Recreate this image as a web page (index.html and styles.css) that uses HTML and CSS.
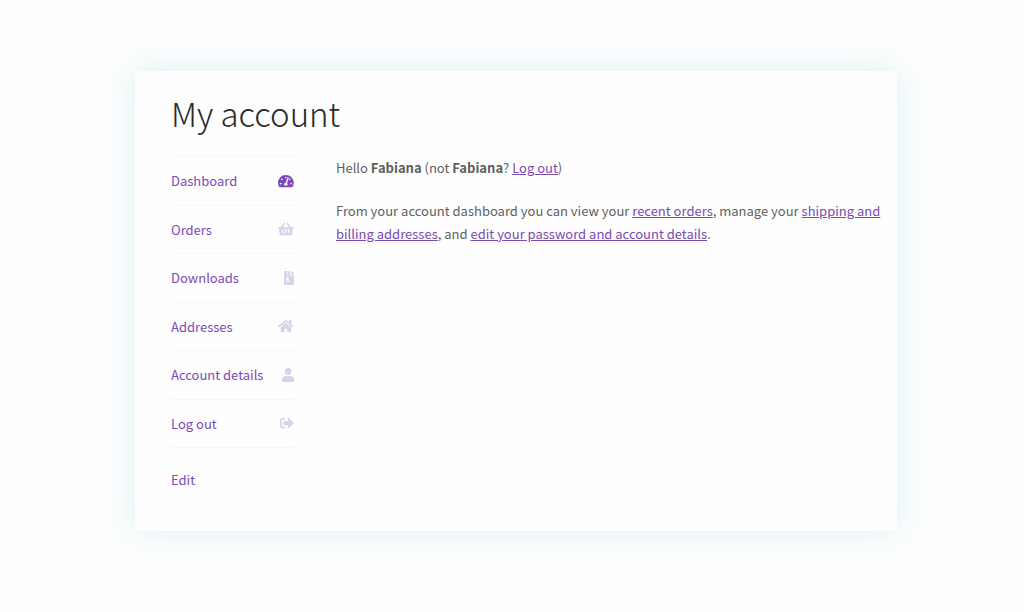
FILE: index.html
```html
<!DOCTYPE html>
<html lang="en">
<head>
    <meta charset="UTF-8">
    <meta name="viewport" content="width=device-width, initial-scale=1.0">
    <title>My account</title>
    <link rel="stylesheet" href="styles.css">
</head>
<body>
    <main class="account">
        <h1 class="account-title">My account</h1>

        <div class="account-body">
            <div class="account-side">
                <nav aria-label="Account pages">
                    <ul class="account-nav">
                        <li class="nav-item is-active">
                            <a href="#dashboard">Dashboard
                                <svg class="icon" viewBox="0 0 576 512" aria-hidden="true"><path d="M288 32C128.94 32 0 160.94 0 320c0 52.8 14.25 102.26 39.06 144.8 5.61 9.62 16.3 15.2 27.44 15.2h443c11.14 0 21.83-5.58 27.44-15.2C561.75 422.26 576 372.8 576 320c0-159.06-128.94-288-288-288zm0 64c14.71 0 26.58 10.13 30.32 23.65-1.11 2.26-2.64 4.23-3.45 6.67l-9.22 27.67c-5.13 3.49-10.97 6.01-17.64 6.01-17.67 0-32-14.33-32-32S270.33 96 288 96zM96 384c-17.67 0-32-14.33-32-32s14.33-32 32-32 32 14.33 32 32-14.33 32-32 32zm48-160c-17.67 0-32-14.33-32-32s14.33-32 32-32 32 14.33 32 32-14.33 32-32 32zm246.77-72.41l-61.33 184C343.13 347.33 352 364.54 352 384c0 11.72-3.38 22.55-8.88 32H232.88c-5.5-9.45-8.88-20.28-8.88-32 0-33.94 26.5-61.43 59.9-63.59l61.34-184.01c4.17-12.56 17.73-19.45 30.36-15.17 12.57 4.19 19.35 17.79 15.17 30.36zm14.66 57.2l15.52-46.55c3.47-1.29 7.13-2.23 11.05-2.23 17.67 0 32 14.33 32 32s-14.33 32-32 32c-11.38-.01-20.89-6.28-26.57-15.22zM480 384c-17.67 0-32-14.33-32-32s14.33-32 32-32 32 14.33 32 32-14.33 32-32 32z"/></svg>
                            </a>
                        </li>
                        <li class="nav-item">
                            <a href="#orders">Orders
                                <svg class="icon" viewBox="0 0 576 512" aria-hidden="true"><path d="M576 216v16c0 13.255-10.745 24-24 24h-8l-26.113 182.788C514.509 462.435 494.257 480 470.37 480H105.63c-23.887 0-44.139-17.565-47.518-41.212L32 256h-8c-13.255 0-24-10.745-24-24v-16c0-13.255 10.745-24 24-24h67.341l106.78-146.821c10.395-14.292 30.407-17.453 44.701-7.058 14.293 10.395 17.453 30.408 7.058 44.701L170.477 192h235.046L326.12 82.821c-10.395-14.292-7.234-34.306 7.059-44.701 14.291-10.395 34.306-7.235 44.701 7.058L484.659 192H552c13.255 0 24 10.745 24 24zM312 392V280c0-13.255-10.745-24-24-24s-24 10.745-24 24v112c0 13.255 10.745 24 24 24s24-10.745 24-24zm112 0V280c0-13.255-10.745-24-24-24s-24 10.745-24 24v112c0 13.255 10.745 24 24 24s24-10.745 24-24zm-224 0V280c0-13.255-10.745-24-24-24s-24 10.745-24 24v112c0 13.255 10.745 24 24 24s24-10.745 24-24z"/></svg>
                            </a>
                        </li>
                        <li class="nav-item">
                            <a href="#downloads">Downloads
                                <svg class="icon" viewBox="0 0 384 512" aria-hidden="true"><path d="M377 105L279.1 7c-4.5-4.5-10.6-7-17-7H256v128h128v-6.1c0-6.3-2.5-12.4-7-16.9zM128.4 336c-17.9 0-32.4 12.1-32.4 27 0 15 14.6 27 32.5 27s32.4-12.1 32.4-27-14.6-27-32.5-27zM224 136V0h-63.6v32h-32V0H24C10.7 0 0 10.7 0 24v464c0 13.3 10.7 24 24 24h336c13.3 0 24-10.7 24-24V160H248c-13.2 0-24-10.8-24-24zM95.9 32h32v32h-32zm32.3 384c-33.2 0-58-30.4-51.4-62.9L96.4 256v-32h32v-32h-32v-32h32v-32h-32V96h32V64h32v32h-32v32h32v32h-32v32h32v32h-32v32h22.1c5.7 0 10.7 4.1 11.8 9.7l17.3 87.7c6.4 32.4-18.4 62.6-51.4 62.6z"/></svg>
                            </a>
                        </li>
                        <li class="nav-item">
                            <a href="#addresses">Addresses
                                <svg class="icon" viewBox="0 0 576 512" aria-hidden="true"><path d="M280.37 148.26L96 300.11V464a16 16 0 0 0 16 16l112.06-.29a16 16 0 0 0 15.92-16V368a16 16 0 0 1 16-16h64a16 16 0 0 1 16 16v95.64a16 16 0 0 0 16 16.05L464 480a16 16 0 0 0 16-16V300L295.67 148.26a12.19 12.19 0 0 0-15.3 0zM571.6 251.47L488 182.56V44.05a12 12 0 0 0-12-12h-56a12 12 0 0 0-12 12v72.61L318.47 43a48 48 0 0 0-61 0L4.34 251.47a12 12 0 0 0-1.6 16.9l25.5 31A12 12 0 0 0 45.15 301l235.22-193.74a12.19 12.19 0 0 1 15.3 0L530.9 301a12 12 0 0 0 16.9-1.6l25.5-31a12 12 0 0 0-1.7-16.93z"/></svg>
                            </a>
                        </li>
                        <li class="nav-item">
                            <a href="#details">Account details
                                <svg class="icon" viewBox="0 0 448 512" aria-hidden="true"><path d="M224 256c70.7 0 128-57.3 128-128S294.7 0 224 0 96 57.3 96 128s57.3 128 128 128zm89.6 32h-16.7c-22.2 10.2-46.9 16-72.9 16s-50.6-5.8-72.9-16h-16.7C60.2 288 0 348.2 0 422.4V464c0 26.5 21.5 48 48 48h352c26.5 0 48-21.5 48-48v-41.6c0-74.2-60.2-134.4-134.4-134.4z"/></svg>
                            </a>
                        </li>
                        <li class="nav-item">
                            <a href="#logout">Log out
                                <svg class="icon" viewBox="0 0 512 512" aria-hidden="true"><path d="M497 273L329 441c-15 15-41 4.5-41-17v-96H152c-13.3 0-24-10.7-24-24v-96c0-13.3 10.7-24 24-24h136V88c0-21.4 25.9-32 41-17l168 168c9.3 9.4 9.3 24.6 0 34zM192 436v-40c0-6.6-5.4-12-12-12H96c-17.7 0-32-14.3-32-32V160c0-17.7 14.3-32 32-32h84c6.6 0 12-5.4 12-12V76c0-6.6-5.4-12-12-12H96c-53 0-96 43-96 96v192c0 53 43 96 96 96h84c6.6 0 12-5.4 12-12z"/></svg>
                            </a>
                        </li>
                    </ul>
                </nav>
                <a class="edit-link" href="#edit">Edit</a>
            </div>

            <div class="account-content">
                <p>Hello <strong>Fabiana</strong> (not <strong>Fabiana</strong>? <a href="#logout">Log out</a>)</p>
                <p>From your account dashboard you can view your <a href="#orders">recent orders</a>, manage your <a href="#addresses">shipping and billing addresses</a>, and <a href="#details">edit your password and account details</a>.</p>
            </div>
        </div>
    </main>
</body>
</html>
```
FILE: styles.css
```css
* { margin: 0; padding: 0; box-sizing: border-box; }
body {
    background: #fefefe;
    color: #5e5e5e;
    font-family: "Source Sans Pro", "Noto Sans CJK SC", sans-serif;
    font-size: 13px;
    line-height: 23px;
    padding: 71px 127px 80px 135px;
}
a { color: #7a4bb3; }
.account {
    background: #fefefe;
    padding: 18px 12px 40px 36px;
    box-shadow: 0 0 32px rgba(140, 210, 220, 0.32);
}
.account-title {
    color: #2b2b2b;
    font-size: 33px;
    font-weight: 300;
    line-height: 48px;
    margin-bottom: 19px;
}
.account-body {
    display: grid;
    grid-template-columns: 123px 1fr;
    gap: 42px;
}

/* side navigation */
.account-nav {
    display: grid;
    grid-auto-rows: 1fr;
    min-height: 292px;
    list-style: none;
    border-top: 1px solid #f6f6f7;
}
.nav-item {
    display: grid;
    border-bottom: 1px solid #f6f6f7;
}
.nav-item a {
    display: flex;
    align-items: center;
    justify-content: space-between;
    text-decoration: none;
}
.icon {
    height: 14px;
    fill: currentColor;
    opacity: 0.25;
}
.is-active .icon { opacity: 1; }
.edit-link {
    display: inline-block;
    margin-top: 20px;
    text-decoration: none;
}

/* page text */
.account-content p { margin-bottom: 20px; }
.account-content strong { font-weight: 600; }
```
